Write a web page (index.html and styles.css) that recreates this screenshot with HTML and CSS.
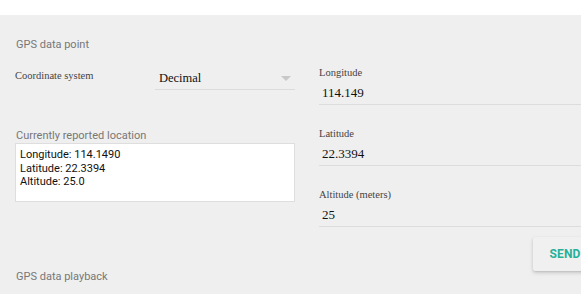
FILE: index.html
```html
<!DOCTYPE html>
<html lang="en">
<head>
    <meta charset="UTF-8">
    <meta name="viewport" content="width=device-width, initial-scale=1.0">
    <title>GPS</title>
    <link rel="stylesheet" href="styles.css">
</head>
<body>
    <div class="topbar"></div>

    <div class="panel">
        <div class="section-title">GPS data point</div>

        <div class="columns">
            <div class="col-left">
                <div class="coord-row">
                    <span class="field-label coord-label">Coordinate system</span>
                    <div class="select">
                        <span>Decimal</span>
                        <span class="caret"></span>
                    </div>
                </div>

                <div class="section-title reported-title">Currently reported location</div>
                <div class="reported">Longitude: 114.1490<br>Latitude: 22.3394<br>Altitude: 25.0</div>
            </div>

            <div class="col-right">
                <div class="field">
                    <div class="field-label">Longitude</div>
                    <div class="field-input">114.149</div>
                </div>
                <div class="field">
                    <div class="field-label">Latitude</div>
                    <div class="field-input">22.3394</div>
                </div>
                <div class="field">
                    <div class="field-label">Altitude (meters)</div>
                    <div class="field-input">25</div>
                </div>
                <div class="actions">
                    <button class="send">SEND</button>
                </div>
            </div>
        </div>

        <div class="section-title playback-title">GPS data playback</div>
    </div>
</body>
</html>
```

FILE: styles.css
```css
html, body {
    margin: 0;
    padding: 0;
    overflow: hidden;
}
body {
    width: 581px;
    height: 294px;
    background-color: #fff;
    font-family: Roboto, "Noto Sans", sans-serif;
}
.topbar {
    height: 15px;
    background-color: #fff;
}
.panel {
    background-color: #efefef;
    height: 279px;
    padding: 23px 0 0 15px;
    box-sizing: border-box;
    overflow: hidden;
}
.section-title {
    font-size: 11px;
    line-height: 14px;
    color: #777;
    padding-left: 1px;
}
.columns {
    display: flex;
    gap: 24px;
    margin-top: 10px;
}
.col-left {
    width: 280px;
    flex: none;
}
.col-right {
    width: 278px;
    flex: none;
}
.field-label {
    font-family: "Liberation Serif", serif;
    font-size: 10.5px;
    line-height: 14px;
    color: #444;
}
.coord-row {
    display: flex;
    align-items: flex-start;
    padding-top: 6px;
}
.coord-label {
    width: 140px;
    flex: none;
    padding-top: 1px;
}
.select {
    flex: 1;
    display: flex;
    justify-content: space-between;
    align-items: center;
    height: 21px;
    padding: 0 2px 0 4px;
    border-bottom: 1px solid #dcdcdc;
    font-family: "Liberation Serif", serif;
    font-size: 12.5px;
    color: #111;
}
.caret {
    width: 0;
    height: 0;
    border-left: 5px solid transparent;
    border-right: 5px solid transparent;
    border-top: 5px solid #c8c8c8;
    margin-right: 2px;
}
.reported-title {
    margin-top: 39px;
}
.reported {
    height: 49px;
    padding: 4px 4px 4px 4px;
    background-color: #fff;
    border: 1px solid #dedede;
    font-family: Roboto, sans-serif;
    font-size: 11px;
    line-height: 13.5px;
    color: #111;
}
.field {
    margin-bottom: 22px;
}
.field:first-child {
    padding-top: 4px;
}
.field-input {
    margin-top: 2px;
    height: 22px;
    padding-left: 3px;
    line-height: 22px;
    border-bottom: 1px solid #dcdcdc;
    font-family: "Liberation Serif", serif;
    font-size: 13px;
    color: #111;
}
.actions {
    display: flex;
    justify-content: flex-end;
    margin-top: -12px;
}
.send {
    width: 64px;
    height: 34px;
    border: none;
    border-radius: 2px;
    background-color: #f0f0f0;
    box-shadow: 0 2px 4px rgba(0, 0, 0, 0.14), 0 1px 2px rgba(0, 0, 0, 0.1);
    color: #26b09a;
    font-family: Roboto, sans-serif;
    font-weight: 700;
    font-size: 12px;
    letter-spacing: 0.2px;
}
.playback-title {
    margin-top: -1px;
}
```
